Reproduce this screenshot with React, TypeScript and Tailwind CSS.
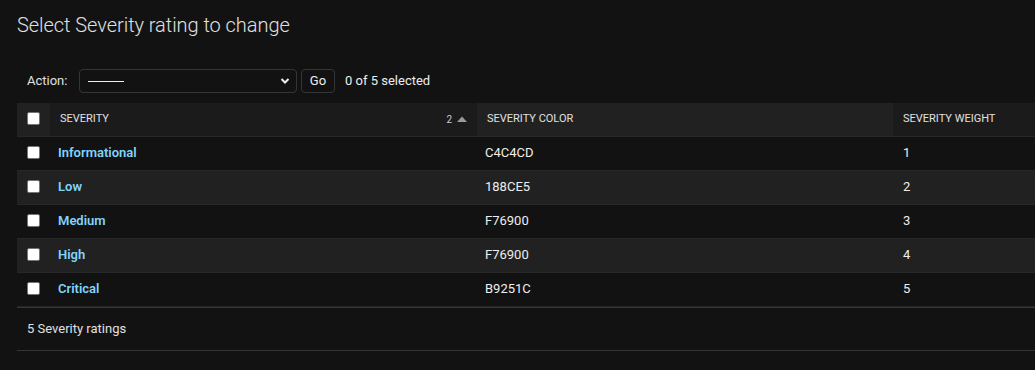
import React from "react";

const rows = [
  { name: "Informational", color: "C4C4CD", weight: "1" },
  { name: "Low", color: "188CE5", weight: "2" },
  { name: "Medium", color: "F76900", weight: "3" },
  { name: "High", color: "F76900", weight: "4" },
  { name: "Critical", color: "B9251C", weight: "5" },
];

function Box() {
  return (
    <span className="block w-[13px] h-[13px] bg-white border border-[#767676] rounded-[2px] -mt-[1px]" />
  );
}

export default function App() {
  return (
    <div
      className="w-[1035px] h-[370px] overflow-hidden bg-[#121212] text-[#eeeeee] pl-[17px]"
      style={{ fontFamily: "Roboto, 'Liberation Sans', sans-serif" }}
    >
      <h1 className="pt-[13px] h-[59px] text-[20px] font-light leading-[24px] text-[#e0e0e0] tracking-[-0.05px]">
        Select Severity rating to change
      </h1>
      <div className="flex items-center h-[44px] pl-[10px] text-[13px] text-[#e0e0e0]">
        <span className="w-[52px]">Action:</span>
        <div className="flex items-center justify-between w-[218px] h-[24px] border border-[#353535] rounded-[4px] px-[8px] bg-[#121212]">
          <span className="block w-[36px] h-[1px] bg-[#eeeeee]" />
          <svg width="10" height="8" viewBox="0 0 10 8" className="mr-[-2px]">
            <path d="M1.5 2 L5 5.5 L8.5 2" stroke="#eeeeee" strokeWidth="2" fill="none" />
          </svg>
        </div>
        <div className="ml-[4px] w-[34px] h-[24px] border border-[#353535] rounded-[4px] flex items-center justify-center text-[13px] text-[#eeeeee]">
          Go
        </div>
        <span className="ml-[10px] text-[#eeeeee]">0 of 5 selected</span>
      </div>
      <table className="w-[1018px] border-collapse table-fixed text-[13px]">
        <colgroup>
          <col className="w-[33px]" />
          <col className="w-[427px]" />
          <col className="w-[416px]" />
          <col />
        </colgroup>
        <thead>
          <tr className="h-[33px] text-[11px] uppercase text-[#e0e0e0] border-b border-[#272727]">
            <th className="bg-[#212121] p-0 pl-[10px] text-left align-middle">
              <Box />
            </th>
            <th className="bg-[#1b1b1b] p-0 pl-[10px] pr-[10px] text-left font-normal">
              <div className="flex items-center justify-between">
                <span>Severity</span>
                <span className="flex items-center gap-[5px] text-[10px] text-[#cccccc]">
                  2
                  <svg width="10" height="6" viewBox="0 0 10 6">
                    <path d="M0 6 L5 0.5 L10 6 Z" fill="#9a9a9a" />
                  </svg>
                </span>
              </div>
            </th>
            <th className="bg-[#212121] p-0 pl-[10px] text-left font-normal">Severity color</th>
            <th className="bg-[#1b1b1b] p-0 pl-[10px] text-left font-normal">Severity weight</th>
          </tr>
        </thead>
        <tbody>
          {rows.map((r, i) => (
            <tr
              key={r.name}
              className={`h-[34px] border-b border-[#272727] ${i % 2 === 1 ? "bg-[#212121]" : "bg-[#121212]"}`}
            >
              <td className="p-0 pl-[10px] align-middle">
                <Box />
              </td>
              <th className="p-0 pl-[8px] text-left font-semibold text-[#81d4fa]">{r.name}</th>
              <td className="p-0 pl-[8px]">{r.color}</td>
              <td className="p-0 pl-[10px]">{r.weight}</td>
            </tr>
          ))}
        </tbody>
      </table>
      <div className="w-[1018px] h-[44px] border-t border-b border-[#353535] flex items-center pl-[10px] text-[13px] text-[#e0e0e0]">
        5 Severity ratings
      </div>
    </div>
  );
}
